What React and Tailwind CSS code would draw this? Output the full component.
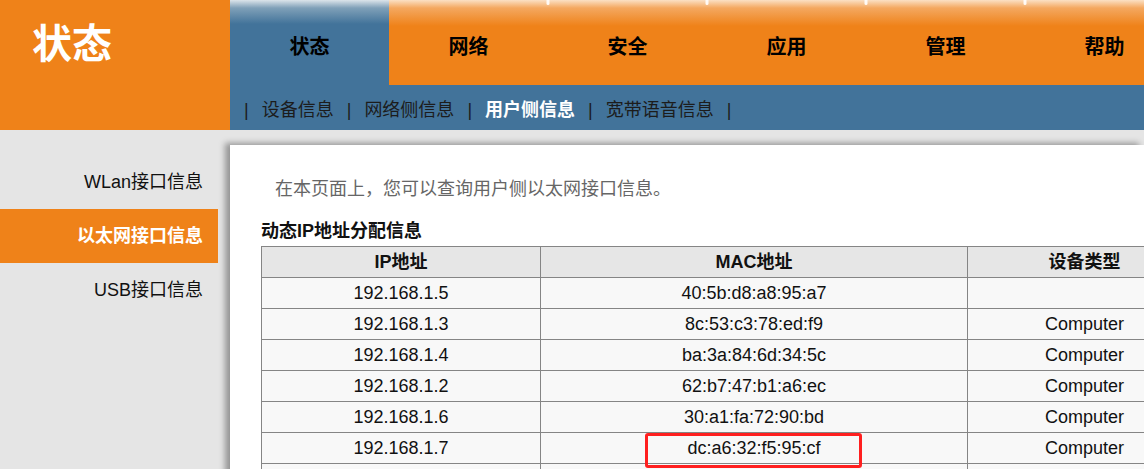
import React from "react";

const tabs = ["状态", "网络", "安全", "应用", "管理", "帮助"];
const subNav = ["设备信息", "网络侧信息", "用户侧信息", "宽带语音信息"];
const sideItems = ["WLan接口信息", "以太网接口信息", "USB接口信息"];

const rows = [
  { ip: "192.168.1.5", mac: "40:5b:d8:a8:95:a7", type: "" },
  { ip: "192.168.1.3", mac: "8c:53:c3:78:ed:f9", type: "Computer" },
  { ip: "192.168.1.4", mac: "ba:3a:84:6d:34:5c", type: "Computer" },
  { ip: "192.168.1.2", mac: "62:b7:47:b1:a6:ec", type: "Computer" },
  { ip: "192.168.1.6", mac: "30:a1:fa:72:90:bd", type: "Computer" },
  { ip: "192.168.1.7", mac: "dc:a6:32:f5:95:cf", type: "Computer", marked: true },
  { ip: "", mac: "", type: "" },
];

function Header() {
  return (
    <div className="flex h-[130px]">
      <div className="w-[230px] shrink-0 bg-[#ef8219] pl-[32px] pt-[18px]">
        <span className="text-[40px] font-bold leading-[52px] text-white">状态</span>
      </div>
      <div className="flex flex-1 flex-col">
        <div className="flex h-[85px]">
          {tabs.map((t, i) => (
            <div
              key={t}
              className={
                i === 0
                  ? "relative flex w-[159px] shrink-0 items-center justify-center bg-[linear-gradient(to_bottom,#dbe4ea_0px,#7fa0b8_8px,#42739a_24px)]"
                  : "relative flex w-[159px] shrink-0 items-center justify-center bg-[linear-gradient(to_bottom,#fbe0c4_0px,#f4a860_8px,#ef8219_26px)]"
              }
            >
              {i > 1 && (
                <span className="absolute left-0 top-0 h-[5px] w-[3px] -translate-x-1/2 rounded-b-full bg-white/90 blur-[0.5px]" />
              )}
              <span className="pt-[8px] text-[20px] font-bold text-black">{t}</span>
            </div>
          ))}
        </div>
        <div className="flex h-[45px] items-center bg-[#42739a] pl-[14px] pt-[5px] text-[18px] text-[#1c1c1c]">
          <span>|</span>
          {subNav.map((s, i) => (
            <React.Fragment key={s}>
              <span className={i === 2 ? "mx-[13px] font-bold text-white" : "mx-[13px]"}>{s}</span>
              <span>|</span>
            </React.Fragment>
          ))}
        </div>
      </div>
    </div>
  );
}

function Sidebar() {
  return (
    <div className="w-[218px] shrink-0 pt-[10px]">
      {sideItems.map((s, i) => (
        <div
          key={s}
          className={
            i === 1
              ? "flex h-[54px] items-center justify-end bg-[#ef8219] pr-[15px] text-[18px] font-bold text-white"
              : "flex h-[54px] items-center justify-end pr-[15px] text-[18px] text-[#111]"
          }
        >
          {s}
        </div>
      ))}
    </div>
  );
}

function LanTable() {
  return (
    <table className="mt-[3px] w-[941px] border-collapse text-[18px] text-[#111]">
      <thead>
        <tr className="h-[31px] bg-[#e6e6e6]">
          <th className="w-[279px] border border-[#858585] p-0 font-bold">IP地址</th>
          <th className="w-[427px] border border-[#858585] p-0 font-bold">MAC地址</th>
          <th className="w-[234px] border border-[#858585] p-0 font-bold">设备类型</th>
        </tr>
      </thead>
      <tbody>
        {rows.map((r, i) => (
          <tr key={i} className="h-[31px] bg-[#f8f8f8]">
            <td className="border border-[#858585] p-0 text-center leading-[29px]">{r.ip}</td>
            <td className="relative border border-[#858585] p-0 text-center leading-[29px]">
              {r.mac}
              {r.marked && (
                <span className="absolute left-[104px] top-0 h-[35px] w-[217px] rounded-[3px] border-[3px] border-[#ff1f1f]" />
              )}
            </td>
            <td className="border border-[#858585] p-0 text-center leading-[29px]">{r.type}</td>
          </tr>
        ))}
      </tbody>
    </table>
  );
}

export default function App() {
  return (
    <div className="h-[469px] w-[1144px] overflow-hidden bg-[#e5e5e5] font-['Liberation_Sans','Noto_Sans_CJK_SC',sans-serif]">
      <Header />
      <div className="flex pt-[15px]">
        <Sidebar />
        <div className="ml-[12px] h-[340px] flex-1 overflow-hidden bg-white pl-[31px] shadow-[-5px_-2px_6px_rgba(0,0,0,0.35)]">
          <p className="pl-[14px] pt-[32px] text-[18px] leading-[24px] text-[#666]">
            在本页面上，您可以查询用户侧以太网接口信息。
          </p>
          <h3 className="mt-[18px] text-[18px] font-bold leading-[24px] text-[#111]">动态IP地址分配信息</h3>
          <LanTable />
        </div>
      </div>
    </div>
  );
}
